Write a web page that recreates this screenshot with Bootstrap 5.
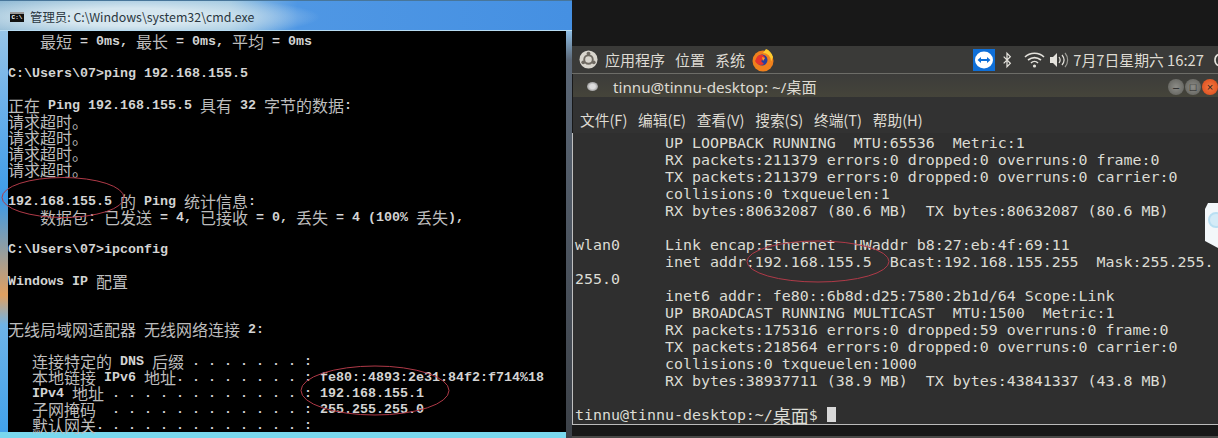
<!DOCTYPE html>
<html lang="zh">
<head>
<meta charset="utf-8">
<title>cmd / terminal</title>
<link rel="stylesheet" href="https://cdn.jsdelivr.net/npm/bootstrap@5.3.0/dist/css/bootstrap.min.css">
<style>
html,body{width:1218px;height:438px;overflow:hidden;background:#181818}
.shot{width:1218px;height:438px;position:relative}
.winside{width:572px;height:438px;flex:none;padding:0 6px 6px 8px;background:linear-gradient(#79d8ee,#79d8ee) left bottom/566px 6px no-repeat,linear-gradient(#8fc0e8 0,#8fc0e8 30px,#5b6776 60px,#3c4148 100%) right top/6px 100% no-repeat,linear-gradient(180deg,#a9cde6 0,#6fb2ea 100px,#3d9be8 200px,#e0a060 295px,#6fb4e8 325px,#3fa0ea 100%)}
.wintitle{height:31px;margin:0 -6px 0 -8px;padding:3px 0 0 10px;background:radial-gradient(ellipse 190px 22px at 130px 16px,#d5e6ef 40%,rgba(213,230,239,0) 100%),linear-gradient(90deg,#8fb9d4 0,#9cc6e0 40%,#4f97e4 52%,#4590e2 100%);border-top:1px solid #48769a;border-bottom:1px solid #b7dcf2;font:12.4px/1 "Noto Sans CJK SC","Liberation Sans",sans-serif;color:#2a3640;gap:6px}
.winicon{width:14px;height:10px;background:#111;border-top:2px solid #9a9a9a;color:#fff;font:bold 6px/7px "Liberation Mono",monospace;flex:none}
.cmdbody{background:#000;height:401px;padding:3px 0 0 0;color:#d4d4d4;font:bold 13.33px/16px "Liberation Mono",monospace}
.hz{display:inline-block;height:16px;margin-top:-1px;font:400 16px/16px "Noto Sans CJK SC",sans-serif;color:#bdbdbd;vertical-align:top}
.cmdline{height:16px;white-space:pre}
.linuxside{width:646px;height:438px;background:#181818;flex:none;padding:46px 0 0 0}
.toppanel{height:28px;background:#3a3a38;border-bottom:1px solid #6d6d68;color:#dedbd3;font:15px/27px "Noto Sans CJK SC",sans-serif;padding:0 0 0 7px;overflow:hidden}
.startorb{margin-right:7px}
.placeitem{margin-right:10px}
.placelast{margin-right:6px}
.tvicon{margin-right:7px}
.clocktext{font:14.8px/27px "Noto Sans CJK SC","Liberation Sans",sans-serif;white-space:nowrap;margin-right:7px}
.termtitle{height:23px;margin-left:1px;padding:2px 0 0 14px;background:linear-gradient(#3c3c3a,#45443a);color:#dedbd3;font:15.2px/20px "Noto Sans","Noto Sans CJK SC",sans-serif}
.dot{width:11px;height:9px;border-radius:50%;background:radial-gradient(#dcdcdc 35%,#666);flex:none;margin-right:15px}
.wbtn{width:16px;height:16px;border-radius:50%;background:radial-gradient(#8d8d88,#5d5d58);color:#222;font:11px/16px "Liberation Sans",sans-serif;text-align:center;flex:none;margin-left:1px}
.wbtn-x{background:radial-gradient(#f47840,#d9481a)}
.termmenu{height:36px;margin-left:1px;background:#323232;color:#dedbd3;font:14.7px/46px "Noto Sans CJK SC","Noto Sans",sans-serif;padding:0 0 0 7px;gap:10.7px}
.termbody{height:292px;background:#2f2f2f;border-left:1px solid #c0c0c0;border-bottom:1px solid #bbb;padding:2px 0 0 2px;color:#dcdcd4;font:14.95px/17px "DejaVu Sans Mono","Noto Sans CJK SC",monospace}
.tline{height:17px;white-space:pre}
.tcjk{display:inline-block;height:17px;font:18px/17px "Noto Sans CJK SC",sans-serif;vertical-align:top}
.cursor{display:inline-block;width:9px;height:15px;background:#d8d8d8;vertical-align:-2px}
.ringlayer{position:absolute;left:0;top:0;pointer-events:none}
.floorstrip{height:2px;margin-top:11px;background:#4a4a48}
</style>
</head>
<body>
<div class="shot d-flex">
  <section class="winside">
    <div class="wintitle d-flex align-items-center">
      <span class="winicon d-block text-center">C:\</span><span>管理员: C:\Windows\system32\cmd.exe</span>
    </div>
    <div class="cmdbody">
<div class="cmdline">    <span class="hz">最短</span> = 0ms, <span class="hz">最长</span> = 0ms, <span class="hz">平均</span> = 0ms</div>
<div class="cmdline"> </div>
<div class="cmdline">C:\Users\07&gt;ping 192.168.155.5</div>
<div class="cmdline"> </div>
<div class="cmdline"><span class="hz">正在</span> Ping 192.168.155.5 <span class="hz">具有</span> 32 <span class="hz">字节的数据</span>:</div>
<div class="cmdline"><span class="hz">请求超时。</span></div>
<div class="cmdline"><span class="hz">请求超时。</span></div>
<div class="cmdline"><span class="hz">请求超时。</span></div>
<div class="cmdline"><span class="hz">请求超时。</span></div>
<div class="cmdline"> </div>
<div class="cmdline">192.168.155.5 <span class="hz">的</span> Ping <span class="hz">统计信息</span>:</div>
<div class="cmdline">    <span class="hz">数据包</span>: <span class="hz">已发送</span> = 4, <span class="hz">已接收</span> = 0, <span class="hz">丢失</span> = 4 (100% <span class="hz">丢失</span>),</div>
<div class="cmdline"> </div>
<div class="cmdline">C:\Users\07&gt;ipconfig</div>
<div class="cmdline"> </div>
<div class="cmdline">Windows IP <span class="hz">配置</span></div>
<div class="cmdline"> </div>
<div class="cmdline"> </div>
<div class="cmdline"><span class="hz">无线局域网适配器</span> <span class="hz">无线网络连接</span> 2:</div>
<div class="cmdline"> </div>
<div class="cmdline">   <span class="hz">连接特定的</span> DNS <span class="hz">后缀</span> . . . . . . . :</div>
<div class="cmdline">   <span class="hz">本地链接</span> IPv6 <span class="hz">地址</span>. . . . . . . . : fe80::4893:2e31:84f2:f714%18</div>
<div class="cmdline">   IPv4 <span class="hz">地址</span> . . . . . . . . . . . . : 192.168.155.1</div>
<div class="cmdline">   <span class="hz">子网掩码</span>  . . . . . . . . . . . . : 255.255.255.0</div>
<div class="cmdline">   <span class="hz">默认网关</span>. . . . . . . . . . . . . :</div>
    </div>
  </section>
  <section class="linuxside">
    <div class="toppanel d-flex align-items-center">
      <svg width="19" height="19" viewBox="0 0 20 20" class="startorb"><circle cx="10" cy="10" r="9.500" fill="#d9d6ce"/><circle cx="10" cy="10" r="4.500" fill="none" stroke="#6f6a62" stroke-width="2"/><circle cx="10" cy="3.800" r="2" fill="#6f6a62"/><circle cx="4.500" cy="13" r="2" fill="#6f6a62"/><circle cx="15.500" cy="13" r="2" fill="#6f6a62"/></svg>
      <span class="placeitem">应用程序</span><span class="placeitem">位置</span><span class="placelast">系统</span>
      <svg width="24" height="24" viewBox="0 0 24 24"><circle cx="12" cy="13" r="10.500" fill="#f0801c"/><path d="M12 5a8 8 0 0 1 8 8c0 2-1 3-1 3l3-7c-1-4-4-7-7-8z" fill="#ffcb2e"/><circle cx="11" cy="12" r="5.500" fill="#2a3f9b"/><path d="M6 9c3-3 7-3 8 1l-4 3 3 3c-3 2-7 1-9-3z" fill="#e8342c"/><path d="M11 9l3 1-2 3z" fill="#f7a428"/></svg>
      <div class="ms-auto d-flex align-items-center">
        <svg width="22" height="22" viewBox="0 0 22 22" class="tvicon"><rect width="22" height="22" fill="#0e6fd8"/><ellipse cx="11" cy="11" rx="9" ry="8.500" fill="#fff"/><path d="M4.500 11l3.500-3v2h6V8l3.500 3-3.500 3v-2H8v2z" fill="#0e6fd8"/></svg>
        <svg width="10" height="18" viewBox="0 0 12 18" class="me-2"><path d="M2 5l8 8-4 4V1l4 4-8 8" fill="none" stroke="#e4e2dc" stroke-width="1.500"/></svg>
        <svg width="21" height="16" viewBox="0 0 21 16" class="ms-1 me-1"><g fill="none" stroke="#e4e2dc" stroke-width="1.600"><path d="M1 5c5-5 14-5 19 0"/><path d="M4 8c4-3 9-3 13 0"/><path d="M7 11c2-2 5-2 7 0"/></g><circle cx="10.500" cy="14" r="1.600" fill="#e4e2dc"/></svg>
        <svg width="20" height="16" viewBox="0 0 20 16" class="me-1"><path d="M1 5h3l4-4v14l-4-4H1z" fill="#e4e2dc"/><g fill="none" stroke="#e4e2dc" stroke-width="1.200"><path d="M10 5c1.500 2 1.500 4 0 6"/><path d="M13 3c2.500 3 2.500 7 0 10"/><path d="M16 1c3.500 4 3.500 10 0 14" stroke="#9a9a94"/></g></svg>
        <span class="clocktext">7月7日星期六 16:27</span>
        <svg width="7" height="16" viewBox="0 0 7 16"><path d="M7 2.500a6.500 6.500 0 0 0 0 11" fill="none" stroke="#e4e2dc" stroke-width="1.600"/></svg>
      </div>
    </div>
    <div class="termtitle d-flex align-items-center">
      <span class="dot"></span><span>tinnu@tinnu-desktop: ~/桌面</span>
      <div class="ms-auto d-flex">
        <span class="wbtn">–</span><span class="wbtn">□</span><span class="wbtn wbtn-x">×</span>
      </div>
    </div>
    <div class="termmenu d-flex">
      <span>文件(F)</span><span>编辑(E)</span><span>查看(V)</span><span>搜索(S)</span><span>终端(T)</span><span>帮助(H)</span>
    </div>
    <div class="termbody">
<div class="tline">          UP LOOPBACK RUNNING  MTU:65536  Metric:1</div>
<div class="tline">          RX packets:211379 errors:0 dropped:0 overruns:0 frame:0</div>
<div class="tline">          TX packets:211379 errors:0 dropped:0 overruns:0 carrier:0</div>
<div class="tline">          collisions:0 txqueuelen:1</div>
<div class="tline">          RX bytes:80632087 (80.6 MB)  TX bytes:80632087 (80.6 MB)</div>
<div class="tline"> </div>
<div class="tline">wlan0     Link encap:Ethernet  HWaddr b8:27:eb:4f:69:11</div>
<div class="tline">          inet addr:192.168.155.5  Bcast:192.168.155.255  Mask:255.255.</div>
<div class="tline">255.0</div>
<div class="tline">          inet6 addr: fe80::6b8d:d25:7580:2b1d/64 Scope:Link</div>
<div class="tline">          UP BROADCAST RUNNING MULTICAST  MTU:1500  Metric:1</div>
<div class="tline">          RX packets:175316 errors:0 dropped:59 overruns:0 frame:0</div>
<div class="tline">          TX packets:218564 errors:0 dropped:0 overruns:0 carrier:0</div>
<div class="tline">          collisions:0 txqueuelen:1000</div>
<div class="tline">          RX bytes:38937711 (38.9 MB)  TX bytes:43841337 (43.8 MB)</div>
<div class="tline"> </div>
<div class="tline">tinnu@tinnu-desktop:~/<span class="tcjk">桌面</span>$ <span class="cursor"></span></div>
    </div>
    <div class="floorstrip"></div>
  </section>
  <svg class="ringlayer" width="1218" height="438" viewBox="0 0 1218 438" fill="none" stroke="#b03a48" stroke-width="1">
    <ellipse cx="63" cy="197.500" rx="61" ry="20"/>
    <ellipse cx="375" cy="390.500" rx="74" ry="24.500"/>
    <ellipse cx="818" cy="261.500" rx="71" ry="20.500"/>
    <path d="M1218 203h-10l-3 6v32l13 7z" fill="#f3f7fa" stroke="none"/>
    <circle cx="1216" cy="220" r="7" fill="#d4ebf7" stroke="#b9dff2" stroke-width="2"/>
  </svg>
</div>
<script src="https://cdn.jsdelivr.net/npm/bootstrap@5.3.0/dist/js/bootstrap.bundle.min.js"></script>
</body>
</html>
